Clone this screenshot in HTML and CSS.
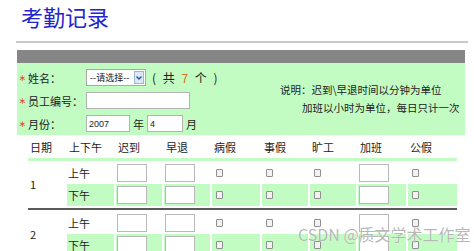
FILE: index.html
```html
<!DOCTYPE html>
<html lang="zh-CN">
<head>
<meta charset="utf-8">
<title>考勤记录</title>
<link rel="stylesheet" href="styles.css">
</head>
<body>
<h1 class="title">考勤记录</h1>
<div class="rule"></div>
<section class="form-box">
  <div class="bar"></div>
  <div class="form-body">
    <div class="fields">
      <div class="field">
        <span class="req">∗</span><span class="label">姓名：</span>
        <div class="select"><span>--请选择--</span><span class="arrow"><svg width="6" height="4" viewBox="0 0 6 4"><path d="M0.5 0.5 L3 3 L5.5 0.5" fill="none" stroke="#2a4f9a" stroke-width="1.3"/></svg></span></div>
        <span class="count">( 共 <em>7</em> 个 )</span>
      </div>
      <div class="field">
        <span class="req">∗</span><span class="label">员工编号：</span>
        <input class="text" type="text" value="">
      </div>
      <div class="field">
        <span class="req">∗</span><span class="label">月份：</span>
        <input class="text year" type="text" value="2007"><span class="unit">年</span><input class="text month" type="text" value="4"><span class="unit">月</span>
      </div>
    </div>
    <div class="note">
      <p>说明：迟到\早退时间以分钟为单位</p>
      <p class="indent">加班以小时为单位，每日只计一次</p>
    </div>
  </div>
</section>
<table class="att">
  <colgroup>
    <col class="c-date"><col class="c-half"><col class="c-46"><col class="c-46"><col class="c-48"><col class="c-46"><col class="c-46"><col class="c-48"><col class="c-49">
  </colgroup>
  <thead>
    <tr class="head"><th>日期</th><th>上下午</th><th>迟到</th><th>早退</th><th>病假</th><th>事假</th><th>旷工</th><th>加班</th><th>公假</th></tr>
    <tr class="sep-green"><td colspan="9"><div></div></td></tr>
  </thead>
  <tbody>
    <tr class="am"><td rowspan="2" class="date">1</td><td>上午</td><td><input class="num" type="text"></td><td><input class="num" type="text"></td><td><input class="chk" type="checkbox"></td><td><input class="chk" type="checkbox"></td><td><input class="chk" type="checkbox"></td><td><input class="num" type="text"></td><td><input class="chk" type="checkbox"></td></tr>
    <tr class="pm"><td>下午</td><td><input class="num" type="text"></td><td><input class="num" type="text"></td><td><input class="chk" type="checkbox"></td><td><input class="chk" type="checkbox"></td><td><input class="chk" type="checkbox"></td><td><input class="num" type="text"></td><td><input class="chk" type="checkbox"></td></tr>
    <tr class="sep-dark"><td colspan="9"><div></div></td></tr>
    <tr class="am"><td rowspan="2" class="date">2</td><td>上午</td><td><input class="num" type="text"></td><td><input class="num" type="text"></td><td><input class="chk" type="checkbox"></td><td><input class="chk" type="checkbox"></td><td><input class="chk" type="checkbox"></td><td><input class="num" type="text"></td><td><input class="chk" type="checkbox"></td></tr>
    <tr class="pm"><td>下午</td><td><input class="num" type="text"></td><td><input class="num" type="text"></td><td><input class="chk" type="checkbox"></td><td><input class="chk" type="checkbox"></td><td><input class="chk" type="checkbox"></td><td><input class="num" type="text"></td><td><input class="chk" type="checkbox"></td></tr>
  </tbody>
</table>
<div class="watermark">CSDN @质文学术工作室</div>
</body>
</html>
```
FILE: styles.css
```css
html, body {
  margin: 0;
  padding: 0;
  background: #ffffff;
  overflow: hidden;
}
body {
  position: relative;
  font-family: "Noto Sans CJK SC", "Noto Sans", sans-serif;
  font-size: 11px;
  color: #222222;
}
.title {
  margin: 0;
  height: 41px;
  box-sizing: border-box;
  padding: 3px 0 0 21px;
  font-size: 22px;
  line-height: 26px;
  font-weight: normal;
  color: #2424cf;
}
.rule {
  height: 2px;
  background: #c8c8c8;
  margin: 0 6px 0 16px;
}
.form-box {
  margin: 7px 9px 0 17px;
  background: #c2fcc2;
}
.bar {
  height: 13px;
  background: #868686;
}
.form-body {
  display: flex;
  padding-top: 3px;
}
.fields {
  width: 263px;
  flex: none;
}
.field {
  display: flex;
  align-items: center;
  height: 23px;
}
.req {
  width: 11px;
  text-align: center;
  font-family: "DejaVu Sans", sans-serif;
  font-size: 9px;
  color: #e2501c;
}
.label {
  width: 58px;
}
.select {
  width: 60px;
  height: 17px;
  box-sizing: border-box;
  border: 1px solid #a9a9a9;
  background: #ffffff;
  display: flex;
  align-items: center;
  padding-left: 3px;
  font-size: 9px;
}
.select .arrow {
  margin-left: auto;
  margin-right: 1px;
  width: 10px;
  height: 13px;
  box-sizing: border-box;
  background: #dde8f6;
  border: 1px solid #9fb5d6;
  display: flex;
  align-items: center;
  justify-content: center;
}
.count {
  margin-left: 6px;
  font-size: 12px;
  word-spacing: 4px;
}
.count em {
  font-style: normal;
  color: #d07018;
}
.text {
  width: 104px;
  height: 17px;
  box-sizing: border-box;
  margin: 0;
  padding: 0 2px;
  border: 1px solid #b3b3b3;
  background: #ffffff;
  font-family: "Liberation Sans", sans-serif;
  font-size: 9px;
  color: #222;
}
.year { width: 44px; }
.month { width: 36px; }
.unit {
  margin: 0 3px;
}
.note {
  margin-top: 15px;
  line-height: 18px;
  font-size: 10.5px;
}
.note p {
  margin: 0;
  white-space: nowrap;
}
.note .indent {
  margin-left: 22px;
}
.att {
  margin-left: 26px;
  width: 433px;
  table-layout: fixed;
  border-collapse: separate;
  border-spacing: 2px 0;
  font-size: 11px;
}
.c-date { width: 37px; }
.c-half { width: 47px; }
.c-46 { width: 46px; }
.c-48 { width: 48px; }
.c-49 { width: 49px; }
.att th {
  height: 23px;
  padding: 0 0 0 2px;
  text-align: left;
  font-weight: normal;
}
.att td {
  padding: 0 1px;
  vertical-align: middle;
}
.am td { height: 23px; }
.pm td { height: 22px; background: #c2fcc2; }
.pm td.date, .am td.date { background: #ffffff; padding-left: 2px; }
.sep-green td { padding: 0; height: 3px; }
.sep-green div { height: 3px; background: #c2fcc2; }
.sep-dark td { padding: 0; height: 5px; }
.sep-dark div { height: 2px; margin-top: 1px; background: #5a5a5a; }
.num {
  display: block;
  width: 30px;
  height: 18px;
  box-sizing: border-box;
  margin: 0;
  padding: 0;
  border: 1px solid #b9b9b9;
  background: #ffffff;
}
.chk {
  -webkit-appearance: none;
  appearance: none;
  display: block;
  width: 7px;
  height: 8px;
  box-sizing: border-box;
  margin: 0 0 0 3px;
  border: 1px solid #8f8f8f;
  border-radius: 1px;
  background: #f2f2f2;
}
.watermark {
  position: absolute;
  left: 298px;
  top: 224px;
  font-size: 16px;
  line-height: 20px;
  white-space: nowrap;
  color: rgba(160, 160, 160, 0.75);
  text-shadow: 0 0 1px #ffffff;
}
```
